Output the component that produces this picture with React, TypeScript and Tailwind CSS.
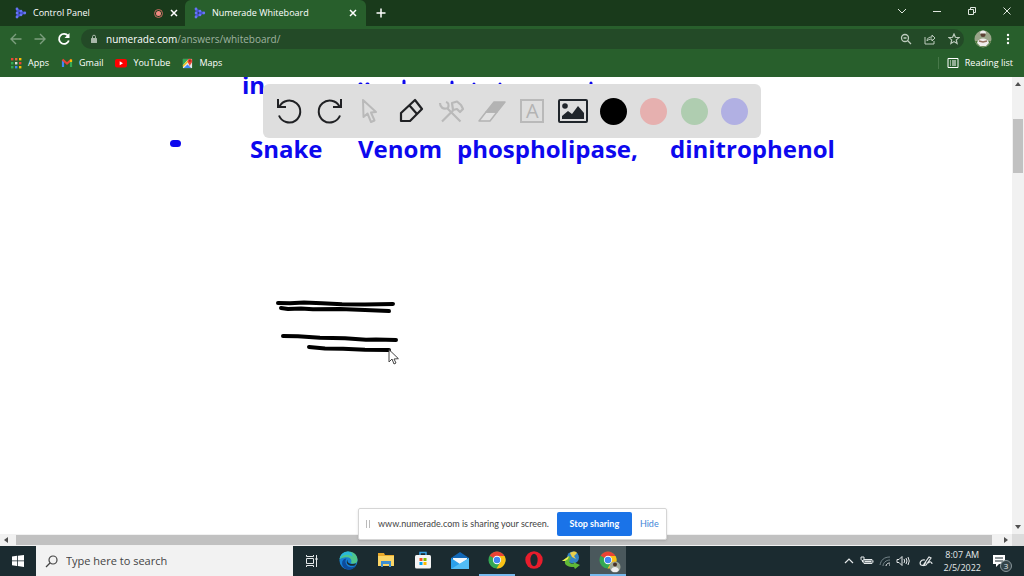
import { useState } from "react";
import type { ReactNode } from "react";

// ── Types ────────────────────────────────────────────────────────────────────
interface IconProps {
  className?: string;
}

interface Tool {
  label: string;
  icon: ReactNode;
}

// ── Browser icons ────────────────────────────────────────────────────────────
const Logo = () => (
  <svg viewBox="0 0 12 12" className="size-3 shrink-0">
    <path d="M1.500 1 11 6 1.500 11Z" fill="#4450cf" />
    <g fill="#6675f5">
      <circle cx="2" cy="2" r="1.400" />
      <circle cx="2" cy="6" r="1.300" />
      <circle cx="2" cy="10" r="1.400" />
      <circle cx="6" cy="4" r="1.300" />
      <circle cx="6" cy="8" r="1.300" />
      <circle cx="9.800" cy="6" r="1.400" />
    </g>
    <circle cx="4.400" cy="6" r=".8" fill="#28452d" />
  </svg>
);

const Close = ({ className = "size-[10px]" }: IconProps) => (
  <svg viewBox="0 0 10 10" className={className} fill="none" stroke="currentColor" strokeWidth="1.500">
    <path d="m2 2 6 6M8 2 2 8" />
  </svg>
);

const Arrow = ({ className = "" }: IconProps) => (
  <svg viewBox="0 0 14 14" className={`size-[14px] ${className}`} fill="none" stroke="currentColor" strokeWidth="1.400">
    <path d="M12.500 7H2M7 2 2 7l5 5" />
  </svg>
);

const Reload = () => (
  <svg viewBox="0 0 14 14" className="size-[14px]" fill="none" stroke="#fff" strokeWidth="1.800">
    <path d="M11 3.800A5 5 0 1 0 11.800 8.500" />
    <path d="M12.500 1v5h-5Z" fill="#fff" stroke="none" />
  </svg>
);

const Lock = () => (
  <svg viewBox="0 0 8 10" className="h-[10px] w-2">
    <rect x="1" y="4" width="6" height="5" rx=".6" fill="#a9b8aa" />
    <path d="M2.500 4V2.700a1.500 1.500 0 0 1 3 0V4" fill="none" stroke="#a9b8aa" />
  </svg>
);

const Gmail = () => (
  <svg viewBox="0 0 12 10" className="h-[10px] w-3" fill="none" strokeWidth="2.200">
    <path d="M2 9V2" stroke="#4285f4" />
    <path d="M10 9V2" stroke="#34a853" />
    <path d="m1.500 1.500 4.500 4 4.500-4" stroke="#ea4335" />
    <path d="M10 4V1.500" stroke="#fbbc04" />
  </svg>
);

const YouTube = () => (
  <svg viewBox="0 0 12 10" className="h-[10px] w-3">
    <rect y="1" width="12" height="8.500" rx="2" fill="#f00" />
    <path d="m4.700 3.300 3.300 2-3.300 2Z" fill="#fff" />
  </svg>
);

const Maps = () => (
  <svg viewBox="0 0 12 12" className="size-[11px]">
    <path d="M1 1h10v10H1Z" fill="#e4e8e4" />
    <path d="M1 1h6L1 8Z" fill="#34a853" />
    <path d="m2 11 4-4 4 4Z" fill="#4285f4" />
    <path d="m1 9 7-7" stroke="#fbbc04" strokeWidth="1.300" />
    <path d="M8.500 9C8 6.500 6 5.500 6 3.300a2.600 2.600 0 0 1 5.200 0C11.200 5.500 9 6.500 8.500 9Z" fill="#ea4335" />
    <circle cx="8.600" cy="3.200" r=".9" fill="#812017" />
  </svg>
);

const AppsGrid = () => (
  <svg viewBox="0 0 12 12" className="size-3">
    {["#ea4335", "#e0653d", "#fbbc04", "#34a853", "#d8e0d8", "#ea4335", "#34a853", "#4285f4", "#fbbc04"].map((fill, i) => (
      <rect key={i} x={1 + (i % 3) * 4} y={1 + Math.floor(i / 3) * 4} width="2.400" height="2.400" fill={fill} />
    ))}
  </svg>
);

const Avatar = () => (
  <svg viewBox="0 0 18 18" className="size-[18px]">
    <circle cx="9" cy="9" r="8.500" fill="#9aa58a" />
    <path d="M1 11h16a8.500 8.500 0 0 1-16 0Z" fill="#507d3d" />
    <path d="M3 13c1-6 11-6 12 0l-3 3H6Z" fill="#f0eded" />
    <circle cx="9" cy="4.500" r="2.500" fill="#5c4136" />
    <path d="M6 3.500a3 3 0 0 1 6 0Z" fill="#eee" />
    <path d="m5 11 4 1 4-1" stroke="#96705e" strokeWidth="1.300" fill="none" />
  </svg>
);

// ── Whiteboard tool icons ────────────────────────────────────────────────────
const Undo = () => (
  <svg viewBox="0 0 28 28" className="size-7" fill="none" stroke="#202124" strokeWidth="2">
    <path d="M4.500 9.500A11 11 0 1 1 4 18.500" />
    <path d="M3 2v8h8" />
  </svg>
);

const Redo = () => (
  <svg viewBox="0 0 28 28" className="size-7" fill="none" stroke="#202124" strokeWidth="2">
    <path d="M23.500 9.500A11 11 0 1 0 24 18.500" />
    <path d="M25 2v8h-8" />
  </svg>
);

const Pointer = () => (
  <svg viewBox="0 0 28 28" className="size-7" fill="none" stroke="#b9b9b9" strokeWidth="2" strokeLinejoin="round">
    <path d="m7 3 .5 17 4-3.500 3.500 8.500 3.500-1.500-3.500-8 5-.5Z" />
  </svg>
);

const Pencil = () => (
  <svg viewBox="0 0 28 28" className="size-7" fill="none" stroke="#202124" strokeWidth="2.200" strokeLinejoin="round">
    <path d="M4 16 18 3l7 9-12 12H4ZM12.500 8.500l7.500 8.500" />
  </svg>
);

const Tools = () => (
  <svg viewBox="0 0 28 28" className="size-7" fill="none" stroke="#b9b9b9" strokeWidth="2.200" strokeLinejoin="round">
    <path d="M3 6c0 4 3 7 8 5 1-3 1-5-2-6M10.500 11.500l13 13" />
    <path d="m5 24.500 12-12M15 6l5-1.500 4 3.500 2 4-3 3-3-3-4 1Z" />
  </svg>
);

const Eraser = () => (
  <svg viewBox="0 0 30 28" className="h-7 w-[30px]" stroke="#b3b3b3" strokeWidth="1.500" strokeLinejoin="round">
    <path d="m2 24 7-9h11l-7 9Z" fill="#e2e2e2" />
    <path d="m9 15 8-10h11l-8 10Z" fill="#b3b3b3" />
  </svg>
);

const TextBox = () => (
  <span className="flex size-6 items-center justify-center border-2 border-[#b9b9b9] font-['Open_Sans',sans-serif] text-[20px] leading-5 text-[#b3b3b3]">
    A
  </span>
);

const Picture = () => (
  <svg viewBox="0 0 30 24" className="h-6 w-[30px]">
    <rect x="1" y="1" width="28" height="22" rx="1" fill="none" stroke="#20252b" strokeWidth="2" />
    <circle cx="7" cy="7" r="2.800" fill="#20252b" />
    <path d="m4 20v-3l6-5 4 3 6-8 6 7v6Z" fill="#20252b" />
  </svg>
);

const TOOLS: Tool[] = [
  { label: "Undo", icon: <Undo /> },
  { label: "Redo", icon: <Redo /> },
  { label: "Select", icon: <Pointer /> },
  { label: "Pen", icon: <Pencil /> },
  { label: "Tools", icon: <Tools /> },
  { label: "Eraser", icon: <Eraser /> },
  { label: "Text", icon: <TextBox /> },
  { label: "Image", icon: <Picture /> },
];

const INKS = [
  { label: "Black", className: "bg-black" },
  { label: "Red", className: "bg-[#e6b0af]" },
  { label: "Green", className: "bg-[#afcdb0]" },
  { label: "Blue", className: "bg-[#b1b0e3]" },
];

// ── Taskbar icons ────────────────────────────────────────────────────────────
const Chrome = ({ className = "size-[18px]" }: IconProps) => (
  <svg viewBox="0 0 20 20" className={className}>
    <circle cx="10" cy="10" r="9.500" fill="#34a853" />
    <path d="M10 10 1.800 5.300a9.500 9.500 0 0 1 16.400 0Z" fill="#ea4335" />
    <path d="M10 5.500h8.400A9.500 9.500 0 0 1 9.500 19.500L14 12Z" fill="#fbc116" />
    <circle cx="10" cy="10" r="4.600" fill="#fff" />
    <circle cx="10" cy="10" r="3.600" fill="#4285f4" />
  </svg>
);

const Edge = () => (
  <svg viewBox="0 0 20 20" className="size-[19px]">
    <circle cx="10" cy="10" r="9.500" fill="#1780d4" />
    <path d="M.6 9C2-2 19-2 19.500 9c0 5-5 5-7 3.500 2-3-1-6-4-6C4 6.500 1 8 .6 9Z" fill="#4fc58b" />
    <path d="M.6 9C1 4 4 1 9 .5 13 1 15 4 14 6 9 2 3 4 .6 9Z" fill="#2ab8d8" />
    <path d="M8 8c-3 3 0 9 5 9 3 0 4-1 5-2-3 6-11 6-14 1C2 12 4 8 8 8Z" fill="#0d4b9b" />
    <path d="M9 9c-1 4 4 6 9 4l-1 2c-5 2-11-1-8-6Z" fill="#1b2b30" />
  </svg>
);

const Folder = () => (
  <svg viewBox="0 0 18 16" className="h-4 w-[18px]">
    <path d="M1 1h6l1 2h9v11H1Z" fill="#e9a92b" />
    <path d="M1 4h16v10H1Z" fill="#fbd667" />
    <path d="M4 15V9h10v6h-2v-3H6v3Z" fill="#3e8ed0" />
  </svg>
);

const Store = () => (
  <svg viewBox="0 0 18 18" className="size-[18px]">
    <path d="M6 5V1.500h6V5" fill="none" stroke="#39a3e6" strokeWidth="1.500" />
    <rect x="1" y="4" width="16" height="13.500" rx="1.500" fill="#f5f5f5" />
    <path d="M5.500 7h3v3h-3Z" fill="#f25022" />
    <path d="M9.500 7h3v3h-3Z" fill="#7fba00" />
    <path d="M5.500 11h3v3h-3Z" fill="#00a4ef" />
    <path d="M9.500 11h3v3h-3Z" fill="#ffb900" />
  </svg>
);

const Mail = () => (
  <svg viewBox="0 0 18 17" className="h-[17px] w-[18px]">
    <path d="m0 6 9-6 9 6v11H0Z" fill="#1267b5" />
    <path d="M2 6h14v6H2Z" fill="#f2f7fa" />
    <path d="m0 6 9 6 9-6v11H0Z" fill="#2ba0ea" />
    <path d="m0 17 18-11v11Z" fill="#52bdf5" />
  </svg>
);

const Opera = () => (
  <svg viewBox="0 0 18 18" className="size-[18px]">
    <circle cx="9" cy="9" r="8.700" fill="#e81d2c" />
    <ellipse cx="9" cy="9" rx="3.600" ry="6.200" fill="#1b2b30" />
  </svg>
);

const Downloader = () => (
  <svg viewBox="0 0 18 18" className="size-[18px]">
    <circle cx="11" cy="6.500" r="6" fill="#3383c6" />
    <path d="M8 2c3-2 6-2 7 0l-3 3 2 3-4-2Z" fill="#e9ce4b" />
    <path d="m0 10 7-5 2 2c-3 3-2 6 3 6l-1-2 7 3-5 4-1-2C6 16 2 14 3 10Z" fill="#60b936" />
    <path d="m0 10 7-5-1 3-3 2Z" fill="#f4ec54" />
  </svg>
);

const SharedChrome = () => (
  <span className="relative">
    <Chrome />
    <span className="absolute -right-1 -bottom-1">
      <svg viewBox="0 0 12 12" className="size-3">
        <circle cx="6" cy="6" r="5.500" fill="#a0a898" />
        <circle cx="6" cy="3.500" r="2" fill="#493229" />
        <path d="M2 9c1-4 7-4 8 0l-2 2H4Z" fill="#eee" />
      </svg>
    </span>
  </span>
);

const APPS = [
  { label: "Edge", icon: <Edge />, state: "border-transparent" },
  { label: "File Explorer", icon: <Folder />, state: "border-transparent" },
  { label: "Store", icon: <Store />, state: "border-transparent" },
  { label: "Mail", icon: <Mail />, state: "border-transparent" },
  { label: "Chrome", icon: <Chrome />, state: "border-[#76b9ed]" },
  { label: "Opera", icon: <Opera />, state: "border-transparent" },
  { label: "Download Manager", icon: <Downloader />, state: "border-transparent" },
  { label: "Chrome profile", icon: <SharedChrome />, state: "border-[#76b9ed] bg-[#4a585c]" },
];

// ── Sections ─────────────────────────────────────────────────────────────────
function BrowserHeader() {
  return (
    <header className="shrink-0 bg-[#285f2c] text-[9px] leading-3 text-white">
      {/* Tab strip */}
      <div className="flex h-[26px] items-center bg-[#193a1b]">
        <div className="flex h-full w-[185px] items-center gap-[6px] pr-[6px] pl-[15px]">
          <Logo />
          <span className="flex-1">Control Panel</span>
          <span className="flex size-[9px] items-center justify-center rounded-full border border-[#c66b60]">
            <span className="size-[5px] rounded-full bg-[#f28b82]" />
          </span>
          <button aria-label="Close Control Panel">
            <Close />
          </button>
        </div>
        <div className="flex h-full w-[181px] items-center gap-[6px] rounded-t-md bg-[#285f2c] pr-2 pl-[9px]">
          <Logo />
          <span className="flex-1">Numerade Whiteboard</span>
          <button aria-label="Close Numerade Whiteboard">
            <Close />
          </button>
        </div>
        <button aria-label="New tab" className="ml-[10px]">
          <svg viewBox="0 0 10 10" className="size-[10px]" stroke="#fff" strokeWidth="1.500">
            <path d="M5 .5v9M.5 5h9" />
          </svg>
        </button>
        <div className="mr-3 mb-1 ml-auto flex items-center gap-[25px] text-[#dfe7df]">
          <button aria-label="Search tabs">
            <svg viewBox="0 0 10 10" className="size-[10px]" fill="none" stroke="currentColor">
              <path d="m1 3 4 4 4-4" />
            </svg>
          </button>
          <button aria-label="Minimize">
            <svg viewBox="0 0 10 10" className="size-[10px]" stroke="currentColor">
              <path d="M1 5.500h8" />
            </svg>
          </button>
          <button aria-label="Restore">
            <svg viewBox="0 0 10 10" className="size-[10px]" fill="none" stroke="currentColor">
              <path d="M1.500 3.500h5v5h-5ZM3.500 3V1.500h5v5H7" />
            </svg>
          </button>
          <button aria-label="Close window">
            <svg viewBox="0 0 10 10" className="size-[10px]" stroke="currentColor">
              <path d="m1.500 1.500 7 7m0-7-7 7" />
            </svg>
          </button>
        </div>
      </div>

      {/* Address row */}
      <div className="flex h-[26px] items-center gap-[10px] pr-[10px] pl-[9px]">
        <button aria-label="Back">
          <Arrow className="text-[#7c9e7e]" />
        </button>
        <button aria-label="Forward">
          <Arrow className="rotate-180 text-[#7c9e7e]" />
        </button>
        <button aria-label="Reload">
          <Reload />
        </button>
        <div className="flex h-5 flex-1 items-center gap-2 rounded-full bg-[#234a27] pr-1 pl-[9px] text-[10px]">
          <Lock />
          <a href="#board" className="flex-1 text-[#9fb3a0]">
            <span className="text-white">numerade.com</span>/answers/whiteboard/
          </a>
          <div className="flex items-center gap-3 text-[#bdcbbd]">
            <button aria-label="Zoom">
              <svg viewBox="0 0 12 12" className="size-3" fill="none" stroke="currentColor" strokeWidth="1.300">
                <circle cx="5" cy="5" r="3.500" />
                <path d="m7.500 7.500 3.500 3.500M3.500 5h3" />
              </svg>
            </button>
            <button aria-label="Share">
              <svg viewBox="0 0 12 12" className="size-3" fill="none" stroke="currentColor">
                <path d="M1 4v7h9V8M3 8c0-3 2-4 5-4V2l3 3-3 3V6C5 6 4 7 3 8Z" />
              </svg>
            </button>
            <button aria-label="Bookmark">
              <svg viewBox="0 0 12 12" className="size-3" fill="none" stroke="currentColor" strokeWidth="1.200">
                <path d="m6 1 1.400 3.300 3.600.3-2.700 2.300.8 3.600L6 8.600l-3.100 1.900.8-3.600L1 4.600l3.600-.3Z" />
              </svg>
            </button>
          </div>
        </div>
        <button aria-label="Profile">
          <Avatar />
        </button>
        <button aria-label="Menu">
          <svg viewBox="0 0 12 12" className="size-3" fill="#fff">
            <circle cx="6" cy="2" r="1.200" />
            <circle cx="6" cy="6" r="1.200" />
            <circle cx="6" cy="10" r="1.200" />
          </svg>
        </button>
      </div>

      {/* Bookmarks */}
      <nav className="flex h-[25px] items-center gap-3 pr-[11px] pb-[3px] pl-[10px]">
        <a href="#apps" className="flex items-center gap-[6px]"><AppsGrid />Apps</a>
        <a href="#gmail" className="flex items-center gap-[6px]"><Gmail />Gmail</a>
        <a href="#youtube" className="flex items-center gap-[6px]"><YouTube />YouTube</a>
        <a href="#maps" className="flex items-center gap-[6px]"><Maps />Maps</a>
        <button className="ml-auto flex items-center gap-[6px] border-l border-[#477849] pl-2">
          <svg viewBox="0 0 12 12" className="size-3" fill="none" stroke="#fff">
            <path d="M1 1.500h10v9H1ZM3 4h1m1 0h4M3 6h1m1 0h4M3 8h1m1 0h4" />
          </svg>
          Reading list
        </button>
      </nav>
    </header>
  );
}

function Toolbar() {
  const [ink, setInk] = useState("Black");

  return (
    <div className="absolute top-[7px] left-[263px] grid h-[54px] w-[498px] grid-cols-12 items-center rounded-md bg-[#dedede] px-[6px]">
      {TOOLS.map((tool) => (
        <button key={tool.label} aria-label={tool.label} className="flex h-8 items-center justify-center">
          {tool.icon}
        </button>
      ))}
      {INKS.map((item) => (
        <button
          key={item.label}
          aria-label={item.label}
          aria-pressed={ink === item.label}
          onClick={() => setInk(item.label)}
          className="flex h-8 items-center justify-center"
        >
          <span className={`size-[27px] rounded-full ${item.className}`} />
        </button>
      ))}
    </div>
  );
}

function Board() {
  return (
    <main id="board" className="relative min-w-0 flex-1 overflow-hidden bg-white">
      {/* Notes */}
      <div className="font-['Open_Sans',sans-serif] text-2xl leading-4 font-bold text-[#0d08ee]">
        <span className="absolute top-0 left-[242px]">in</span>
        <span className="absolute top-[63px] left-[170px] h-[7px] w-[11px] rounded-full bg-[#0d08ee]" />
        <span className="absolute top-16 left-[250px]">Snake</span>
        <span className="absolute top-16 left-[358px]">Venom</span>
        <span className="absolute top-16 left-[457px]">phospholipase,</span>
        <span className="absolute top-16 left-[670px]">dinitrophenol</span>
      </div>

      {/* Ink strokes */}
      <svg className="absolute top-0 left-0 h-[300px] w-full" fill="none" strokeLinecap="round" strokeLinejoin="round">
        <path d="M360 7h1m6 0h1M404 4v4M452 5v4M474 7v1M500 7v1M591 6v2" stroke="#0d08ee" strokeWidth="3" />
        <g stroke="#000" strokeWidth="4">
          <path d="m278 226 12 .2 14-.8 18 .8 20 1 23 .3 28-.6" />
          <path d="m281 231 7 1 13-.5 12 .8 27-.2 25 1 24 1" />
          <path d="m283 259 15 .2 22 1.500 25 .5 21 1.500 10-.3 20 .6" />
          <path d="m309 270 16 1.500 18 .3 22 1 24 .2" />
        </g>
        <path d="m389 273v12l3-3 2 5 2-1-2-4 4-.3Z" fill="#fff" stroke="#444" />
      </svg>

      <Toolbar />
    </main>
  );
}

function ShareNotice() {
  return (
    <div role="dialog" aria-label="Screen sharing" className="absolute bottom-[6px] left-[358px] flex h-8 items-center rounded-xs border border-[#d5d5d5] bg-white px-[7px] font-['Lato',sans-serif] text-[9px] whitespace-nowrap shadow">
      <span className="mr-2 h-2 w-1 border-x border-[#bbb]" />
      <span className="mr-2 text-[#444]">www.numerade.com is sharing your screen.</span>
      <button className="mr-2 h-6 w-[75px] rounded-xs bg-[#1a73e8] font-bold text-white">Stop sharing</button>
      <button className="text-[#4285d8]">Hide</button>
    </div>
  );
}

function Taskbar() {
  return (
    <footer className="flex h-[30px] shrink-0 items-center bg-[#1b2b30] text-white">
      <button aria-label="Start" className="flex h-full w-9 items-center justify-center">
        <svg viewBox="0 0 12 12" className="size-3" fill="#fff">
          <path d="m0 1.500 5-.7v4.700H0ZM5.800.7 12 0v5.500H5.800ZM0 6.300h5V11l-5-.7Zm5.800 0H12V12l-6.200-.9Z" />
        </svg>
      </button>
      <label className="flex h-full w-[257px] items-center gap-2 bg-[#f2f2f2] pl-[9px] text-[#444]">
        <svg viewBox="0 0 13 13" className="size-[13px]" fill="none" stroke="currentColor" strokeWidth="1.200">
          <circle cx="8" cy="5" r="4" />
          <path d="M5 8 1 12" />
        </svg>
        <input
          aria-label="Search"
          placeholder="Type here to search"
          className="min-w-0 flex-1 font-['Open_Sans',sans-serif] text-[11px] outline-none placeholder:text-[#444]"
        />
      </label>
      <button aria-label="Task view" className="flex h-full w-[37px] items-center justify-center">
        <svg viewBox="0 0 14 12" className="h-3 w-[14px]" fill="none" stroke="#e5e9ea">
          <path d="M1.500 3.500h7v5h-7ZM1.500 0v1.500h7V0M1.500 12v-1.500h7V12M11.500 0v12" />
          <path d="M10.500 3h2v2h-2Z" fill="#e5e9ea" stroke="none" />
        </svg>
      </button>
      {APPS.map((app) => (
        <button key={app.label} aria-label={app.label} className="flex h-full w-[37px] items-center justify-center">
          <span className={`flex h-full w-9 items-center justify-center border-b-2 ${app.state}`}>{app.icon}</span>
        </button>
      ))}
      <div className="ml-auto flex h-full items-center gap-[5px] text-[#e5e9ea]">
        <svg viewBox="0 0 12 12" className="size-3" fill="none" stroke="currentColor" strokeWidth="1.200">
          <path d="m2 8 4-4 4 4" />
        </svg>
        <svg viewBox="0 0 14 12" className="h-3 w-[14px]" fill="none" stroke="currentColor">
          <path d="M4 4.500h8v4H4ZM13 5.500v2M1 2v2c0 2 3 2 3 0V2ZM2.500 5v2H4" />
          <path d="M5 5.500h6v2H5Z" fill="currentColor" stroke="none" />
        </svg>
        <svg viewBox="0 0 12 12" className="size-3" fill="none" stroke="#75858a">
          <path d="M1 10C2 5 5 2 11 2M4 11c0-3 3-6 7-6" />
          <path d="M7 11c0-2 2-3 4-3M10 10h1" stroke="currentColor" />
        </svg>
        <svg viewBox="0 0 14 12" className="h-3 w-[14px]" fill="none" stroke="currentColor">
          <path d="M1 4.500h2l3-3v9l-3-3H1ZM8 4q1.500 2 0 4M10 3q2 3 0 6M12 2q2.500 4 0 8" />
        </svg>
        <svg viewBox="0 0 14 12" className="ml-1 h-3 w-[14px]" fill="none" stroke="currentColor" strokeWidth="1.200">
          <path d="m5 9 5-7 2 1-5 7-2 .5ZM6 5C2 4 0 8 2 10c2 1 4-1 5-3M9 8c2-2 4-1 4 1" />
        </svg>
        <time className="mx-[6px] text-center font-['Open_Sans',sans-serif] text-[9px] leading-[13px]">
          8:07 AM
          <br />
          2/5/2022
        </time>
        <button aria-label="3 notifications" className="relative mr-3 flex h-full w-5 items-center">
          <svg viewBox="0 0 14 14" className="size-[14px]">
            <path d="M1 1h12v9H7l-3 3v-3H1Z" fill="#fff" />
            <path d="M3 4h8M3 7h8" stroke="#1b2b30" />
          </svg>
          <span className="absolute right-0 bottom-1 flex size-3 items-center justify-center rounded-full border border-[#89969a] bg-[#334349] text-[8px] leading-none">
            3
          </span>
        </button>
      </div>
    </footer>
  );
}

// ── Page ─────────────────────────────────────────────────────────────────────
export default function App() {
  return (
    <div className="flex h-screen flex-col overflow-hidden font-['Open_Sans','Noto_Sans',sans-serif]">
      <BrowserHeader />
      <div className="relative flex min-h-0 flex-1 flex-col">
        <div className="flex min-h-0 flex-1">
          <Board />
          {/* Vertical scrollbar */}
          <div className="flex w-3 shrink-0 flex-col items-center bg-[#f1f1f1] py-[5px]">
            <svg viewBox="0 0 6 4" className="h-1 w-[6px]">
              <path d="m0 4 3-4 3 4Z" fill="#505050" />
            </svg>
            <span className="mt-[33px] h-[54px] w-[10px] bg-[#c1c1c1]" />
            <svg viewBox="0 0 6 4" className="mt-auto h-1 w-[6px]">
              <path d="m0 0 3 4 3-4Z" fill="#505050" />
            </svg>
          </div>
        </div>
        {/* Horizontal scrollbar */}
        <div className="flex h-3 shrink-0 items-center bg-[#f1f1f1] pl-1">
          <svg viewBox="0 0 4 6" className="h-[6px] w-1">
            <path d="m4 0-4 3 4 3Z" fill="#505050" />
          </svg>
          <span className="mx-2 h-[10px] flex-1 bg-[#c1c1c1]" />
          <svg viewBox="0 0 4 6" className="mx-1 h-[6px] w-1">
            <path d="m0 0 4 3-4 3Z" fill="#505050" />
          </svg>
          <span className="h-full w-3 bg-[#dcdcdc]" />
        </div>
        <ShareNotice />
      </div>
      <Taskbar />
    </div>
  );
}
